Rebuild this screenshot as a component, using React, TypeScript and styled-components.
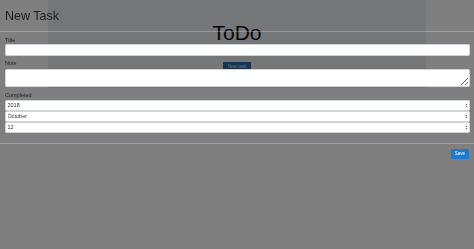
import React from "react";
import styled, { createGlobalStyle } from "styled-components";

const Global = createGlobalStyle`
  html, body { margin: 0; padding: 0; }
  body {
    font-family: "Liberation Sans", Arial, sans-serif;
    background: #ffffff;
    color: #212529;
    width: 474px;
    height: 249px;
    overflow: hidden;
  }
`;

const Page = styled.div`
  position: relative;
  width: 474px;
  height: 249px;
  background: #ffffff;
`;

const Jumbo = styled.div`
  width: 378px;
  height: 88px;
  margin: 0 auto;
  background: #ebedef;
  display: flex;
  flex-direction: column;
  align-items: center;
`;

const Heading = styled.h1`
  margin: 22px 0 0;
  font-size: 21px;
  line-height: 1;
  font-weight: 400;
  color: #0f0f0f;
`;

const PageButton = styled.button`
  margin-top: 19px;
  width: 28px;
  height: 9px;
  padding: 0;
  border: none;
  border-radius: 1px;
  background: #2f6aa3;
  color: #d6dde6;
  font-family: "Liberation Sans", Arial, sans-serif;
  font-size: 4.5px;
  line-height: 9px;
`;

const Backdrop = styled.div`
  position: fixed;
  inset: 0;
  background: rgba(0, 0, 0, 0.5);
`;

const Modal = styled.div`
  position: fixed;
  top: 0;
  left: 0;
  right: 0;
  display: flex;
  flex-direction: column;
`;

const Header = styled.div`
  height: 32px;
  box-sizing: border-box;
  padding: 10px 5px 0;
  border-bottom: 1px solid rgba(255, 255, 255, 0.25);
`;

const Title = styled.h5`
  margin: 0;
  font-size: 12.5px;
  line-height: 1;
  font-weight: 400;
  color: #1e1e1e;
`;

const Body = styled.div`
  padding: 5px 4px 10px 5px;
  display: flex;
  flex-direction: column;
`;

const Label = styled.label<{ $gap: number }>`
  display: block;
  font-size: 5.5px;
  line-height: 6px;
  height: 6px;
  color: #222;
  margin-bottom: ${(p) => p.$gap}px;
`;

const Input = styled.input`
  display: block;
  box-sizing: border-box;
  height: 12px;
  width: 100%;
  margin: 0 0 4px;
  border: 1px solid #cfd4da;
  border-radius: 1.5px;
  background: #fff;
  padding: 0 2px;
  font-size: 5.5px;
`;

const TextArea = styled.textarea`
  display: block;
  box-sizing: border-box;
  height: 18px;
  width: 100%;
  margin: 0 0 5px;
  border: 1px solid #cfd4da;
  border-radius: 1.5px;
  background: #fff;
  padding: 0 2px;
  font-size: 5.5px;
  resize: vertical;
`;

const SelectWrap = styled.div`
  position: relative;
  height: 11px;
`;

const Select = styled.select`
  display: block;
  box-sizing: border-box;
  appearance: none;
  width: 100%;
  height: 11px;
  margin: 0;
  border: 1px solid #cfd4da;
  border-radius: 1.5px;
  background: #fff;
  padding: 0 1.5px;
  font-family: "Liberation Sans", Arial, sans-serif;
  font-size: 5.5px;
  line-height: 9px;
  color: #333;
`;

const Arrows = styled.svg`
  display: block;
  position: absolute;
  right: 2.5px;
  top: 3px;
  width: 3px;
  height: 5px;
  pointer-events: none;
`;

const Footer = styled.div`
  border-top: 1px solid rgba(255, 255, 255, 0.25);
  padding: 5px 5px 0;
  display: flex;
  justify-content: flex-end;
`;

const SaveButton = styled.button`
  width: 18px;
  height: 10px;
  padding: 0;
  border: none;
  border-radius: 1px;
  background: #1f7bd0;
  color: #ffffff;
  font-family: "Liberation Sans", Arial, sans-serif;
  font-size: 4.5px;
  line-height: 10px;
`;

const SelectBox = ({ value, options }: { value: string; options: string[] }) => (
  <SelectWrap>
    <Select defaultValue={value}>
      {options.map((o) => (
        <option key={o}>{o}</option>
      ))}
    </Select>
    <Arrows viewBox="0 0 6 10">
      <path d="M1 4 L3 1.5 L5 4 Z M1 6 L3 8.5 L5 6 Z" fill="#555" />
    </Arrows>
  </SelectWrap>
);

export default function App() {
  return (
    <>
      <Global />
      <Page>
        <Jumbo>
          <Heading>ToDo</Heading>
          <PageButton>New task</PageButton>
        </Jumbo>
        <Backdrop />
        <Modal>
          <Header>
            <Title>New Task</Title>
          </Header>
          <Body>
            <Label $gap={1}>Title</Label>
            <Input />
            <Label $gap={3}>Note</Label>
            <TextArea />
            <Label $gap={2}>Completed</Label>
            <SelectBox value="2018" options={["2017", "2018", "2019"]} />
            <SelectBox value="October" options={["September", "October", "November"]} />
            <SelectBox value="12" options={["11", "12", "13"]} />
          </Body>
          <Footer>
            <SaveButton>Save</SaveButton>
          </Footer>
        </Modal>
      </Page>
    </>
  );
}
